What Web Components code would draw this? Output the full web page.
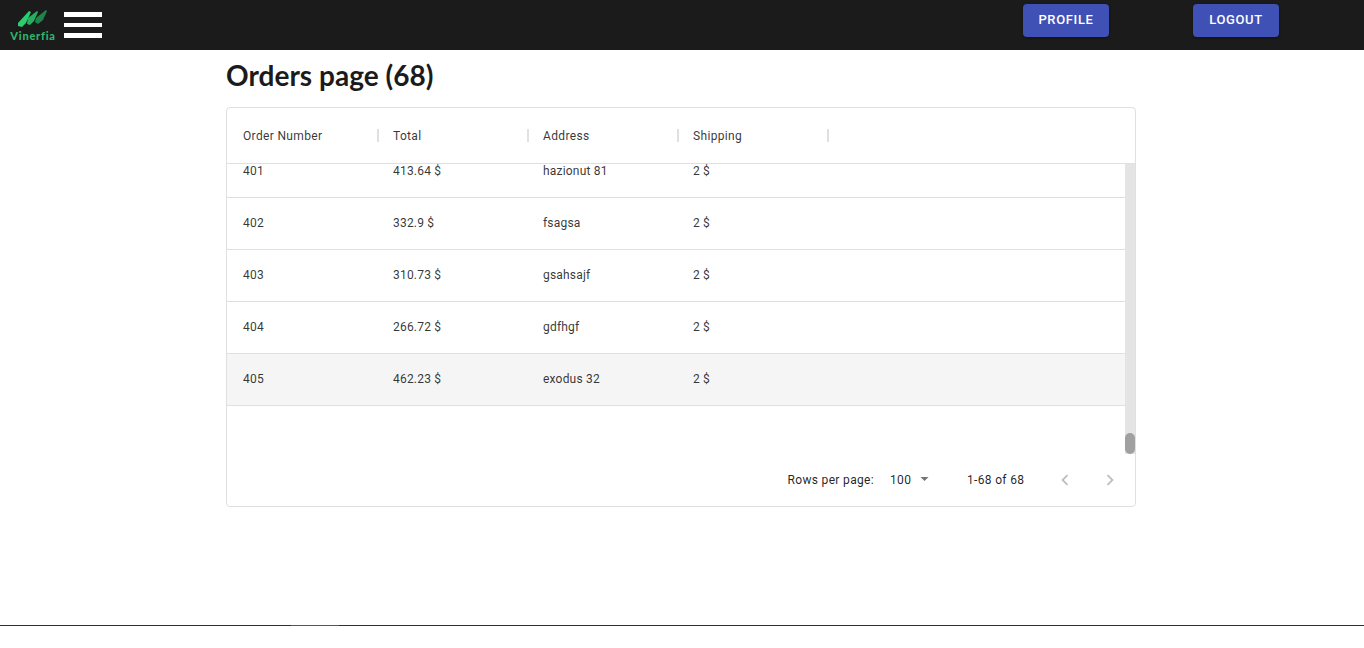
<!DOCTYPE html>
<html>
<head>
<meta charset="utf-8">
<title>Orders</title>
<style>
  html, body { margin: 0; padding: 0; background: #fff; overflow: hidden; }
  body { font-family: Roboto, sans-serif; }
</style>
</head>
<body>
<app-header></app-header>
<orders-page></orders-page>
<app-footer></app-footer>

<script>
class AppHeader extends HTMLElement {
  constructor() {
    super();
    this.attachShadow({ mode: 'open' });
    this.shadowRoot.innerHTML = `
    <style>
      :host { display: flex; align-items: flex-start; height: 50px; background: #1b1b1b; }
      .logo { display: flex; flex-direction: column; align-items: center; width: 46px; margin: 10px 0 0 10px; }
      .logo svg { display: block; }
      .logo span { font: 900 11px/11px Lato, sans-serif; color: #2fb56e; letter-spacing: .75px; white-space: nowrap; margin-top: 3px; }
      .burger { display: flex; flex-direction: column; gap: 6px; width: 38px; margin: 12px 0 0 8px; }
      .burger i { display: block; height: 4.5px; background: #fff; }
      .actions { display: flex; gap: 84px; margin: 4px 85px 0 auto; }
      button {
        width: 86px; height: 33px; padding: 0 0 2px; border: none; border-radius: 4px;
        background: #3f51b5; color: #fff; cursor: pointer;
        font: 500 13px Roboto, sans-serif; letter-spacing: .65px; text-transform: uppercase;
        box-shadow: 0 1px 3px rgba(0,0,0,.4);
      }
    </style>
    <div class="logo">
      <svg width="30" height="17" viewBox="0 0 30 17">
        <polygon points="0,13 11,1 13,2 8,13 4,17 0,16" fill="#2ecc71"/>
        <polygon points="10,8 19,1 20,2 16,11 12,15 9,14" fill="#27ae60"/>
        <polygon points="18,8 28,0 29,1 25,10 20,14 17,12" fill="#1e8449"/>
      </svg>
      <span>Vinerfia</span>
    </div>
    <div class="burger"><i></i><i></i><i></i></div>
    <div class="actions">
      <button>Profile</button>
      <button>Logout</button>
    </div>`;
  }
}

class OrderRow extends HTMLElement {
  constructor() {
    super();
    this.attachShadow({ mode: 'open' });
  }

  connectedCallback() {
    const cells = ['number', 'total', 'address', 'shipping'].map(k => `<div>${this.getAttribute(k)}</div>`).join('');
    this.shadowRoot.innerHTML = `
    <style>
      :host { display: flex; flex: none; box-sizing: border-box; height: 52px; padding-bottom: 1px; align-items: center; border-bottom: 1px solid #e0e0e0; background: var(--row-bg, #fff); }
      :host([hover]) { --row-bg: #f5f5f5; }
      div { width: 150px; box-sizing: border-box; padding: 0 16px; font: 400 12px Roboto, sans-serif; letter-spacing: .2px; color: rgba(0,0,0,.8); }
    </style>
    ${cells}`;
  }
}

class OrdersGrid extends HTMLElement {
  constructor() {
    super();
    this.attachShadow({ mode: 'open' });
    this.shadowRoot.innerHTML = `
    <style>
      :host { display: block; box-sizing: border-box; width: 910px; height: 400px; border: 1px solid #e0e0e0; border-radius: 4px; background: #fff;
        font: 400 12px Roboto, sans-serif; color: rgba(0,0,0,.8); letter-spacing: .34px; }
      .head { display: flex; height: 55px; border-bottom: 1px solid #e0e0e0; }
      .col { position: relative; width: 150px; box-sizing: border-box; padding: 0 16px; display: flex; align-items: center; }
      .col::after { content: ''; position: absolute; right: -2px; top: 21px; width: 2px; height: 13px; background: #e0e0e0; }
      .body { display: flex; height: 290px; }
      .rows { flex: 1; min-width: 0; display: flex; flex-direction: column-reverse; overflow: hidden; }
      .list { flex: none; display: flex; flex-direction: column; padding-bottom: 48px; }
      .track { flex: none; display: flex; align-items: flex-end; width: 10px; background: #e4e4e4; }
      .thumb { width: 10px; height: 21px; border-radius: 5px; background: #a0a0a0; }
      .foot { display: flex; align-items: center; height: 52px; padding-right: 3px; letter-spacing: .33px; color: rgba(0,0,0,.87); }
      .foot .label { margin-left: auto; }
      .select { display: flex; align-items: center; margin-left: 16px; width: 39px; justify-content: space-between; }
      .select svg { display: block; margin-top: -3px; }
      .range { margin-left: 38px; width: 56px; white-space: nowrap; }
      .nav { display: flex; margin-left: 19px; }
      .nav span { width: 45px; height: 24px; display: flex; justify-content: center; align-items: center; }
    </style>
    <div class="head">
      <div class="col">Order Number</div>
      <div class="col">Total</div>
      <div class="col">Address</div>
      <div class="col">Shipping</div>
    </div>
    <div class="body">
      <div class="rows"><div class="list"><slot></slot></div></div>
      <div class="track"><div class="thumb"></div></div>
    </div>
    <div class="foot">
      <span class="label">Rows per page:</span>
      <div class="select">
        <span>100</span>
        <svg width="9" height="4" viewBox="0 0 10 5"><path d="M0 0h10L5 5z" fill="#757575"/></svg>
      </div>
      <span class="range">1-68 of 68</span>
      <div class="nav">
        <span><svg width="24" height="24" viewBox="0 0 24 24"><path d="M15.41 7.41 14 6l-6 6 6 6 1.41-1.41L10.83 12z" fill="#bdbdbd" transform="translate(12 12) scale(.92) translate(-12 -12)"/></svg></span>
        <span><svg width="24" height="24" viewBox="0 0 24 24"><path d="M10 6 8.59 7.41 13.17 12l-4.58 4.59L10 18l6-6z" fill="#bdbdbd" transform="translate(12 12) scale(.92) translate(-12 -12)"/></svg></span>
      </div>
    </div>`;
  }
}

class OrdersPage extends HTMLElement {
  constructor() {
    super();
    this.attachShadow({ mode: 'open' });
    this.orders = [
      ['401', '413.64 $', 'hazionut 81', '2 $'],
      ['402', '332.9 $', 'fsagsa', '2 $'],
      ['403', '310.73 $', 'gsahsajf', '2 $'],
      ['404', '266.72 $', 'gdfhgf', '2 $'],
      ['405', '462.23 $', 'exodus 32', '2 $'],
    ];
    this.shadowRoot.innerHTML = `
    <style>
      :host { display: block; height: 575px; box-sizing: border-box; padding-left: 226px; }
      h1 { margin: 0; height: 57px; font: 700 28px/51px Lato, sans-serif; letter-spacing: .03px; color: #1b1b1b; }
    </style>
    <h1>Orders page (68)</h1>
    <orders-grid>
      ${this.orders.map((o, i) => `<order-row number="${o[0]}" total="${o[1]}" address="${o[2]}" shipping="${o[3]}" ${i === 4 ? 'hover' : ''}></order-row>`).join('')}
    </orders-grid>`;
  }
}

class AppFooter extends HTMLElement {
  constructor() {
    super();
    this.attachShadow({ mode: 'open' });
    this.shadowRoot.innerHTML = `
    <style>
      :host { display: block; height: 23px; border-top: 1px solid #263238; }
      .fade { width: 48px; height: 1px; margin: -1px 0 0 291px; background: #4f5b62; }
    </style>
    <div class="fade"></div>`;
  }
}

customElements.define('app-header', AppHeader);
customElements.define('order-row', OrderRow);
customElements.define('orders-grid', OrdersGrid);
customElements.define('orders-page', OrdersPage);
customElements.define('app-footer', AppFooter);
</script>
</body>
</html>
